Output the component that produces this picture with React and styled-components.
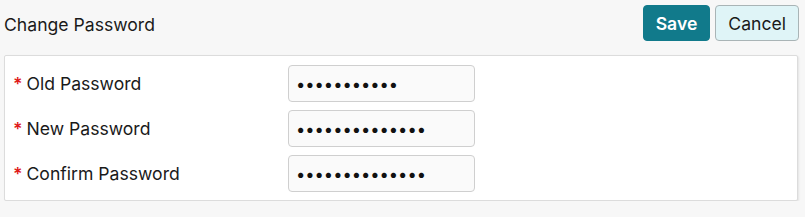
import React from 'react'
import styled, { createGlobalStyle } from 'styled-components';

const Global = createGlobalStyle`
  body {
    margin: 0;
    background: #f7f7f7;
    font-family: Inter, "Liberation Sans", sans-serif;
    color: #1a1a1a;
  }
`

const Page = styled.section`
  padding: 5px 6px 0 4px;
`

const Header = styled.div`
  display: flex;
  justify-content: space-between;
  align-items: center;
  height: 36px;
  margin-bottom: 14px;
`

const Title = styled.h2`
  margin: 2px 0 0;
  font-size: 17.6px;
  font-weight: 400;
`

const Actions = styled.div`
  display: flex;
  gap: 5px;
`

const Button = styled.button`
  height: 36px;
  padding: 0 12px;
  border-radius: 4px;
  font-family: inherit;
  font-size: 17.6px;
  border: 1px solid ${p => (p.primary ? '#117a8b' : '#a9b4b6')};
  background: ${p => (p.primary ? '#117a8b' : '#dff4f7')};
  color: ${p => (p.primary ? '#fff' : '#1a1a1a')};
  font-weight: ${p => (p.primary ? 600 : 400)};
`

const Card = styled.div`
  background: #fff;
  border: 1px solid #dcdcdc;
  border-radius: 2px;
  box-shadow: 1px 1px 2px rgba(0, 0, 0, 0.08);
  padding: 9px 8px 8px 8px;
  margin-right: 1px;
  display: flex;
  flex-direction: column;
  gap: 8px;
`

const Row = styled.div`
  display: flex;
  align-items: center;
`

const Label = styled.label`
  width: 275px;
  font-size: 17.6px;
`

const Star = styled.span`
  color: #e01b1b;
  font-weight: 600;
  margin-right: 4px;
`

const Input = styled.input`
  width: 187px;
  height: 37px;
  box-sizing: border-box;
  border: 1px solid #cfcfcf;
  border-radius: 4px;
  background: #fafafa;
  padding: 0 7px;
  font-size: 16.5px;
  font-family: inherit;
  color: #111;
`

const fields = [
  { label: 'Old Password', value: 'xxxxxxxxxxx' },
  { label: 'New Password', value: 'xxxxxxxxxxxxxx' },
  { label: 'Confirm Password', value: 'xxxxxxxxxxxxxx' },
]

function App() {
  return (
    <Page>
      <Global />
      <Header>
        <Title>Change Password</Title>
        <Actions>
          <Button primary>Save</Button>
          <Button>Cancel</Button>
        </Actions>
      </Header>
      <Card>
        {fields.map(f => (
          <Row key={f.label}>
            <Label><Star>*</Star>{f.label}</Label>
            <Input type="password" defaultValue={f.value} readOnly />
          </Row>
        ))}
      </Card>
    </Page>
  )
}

export default App
